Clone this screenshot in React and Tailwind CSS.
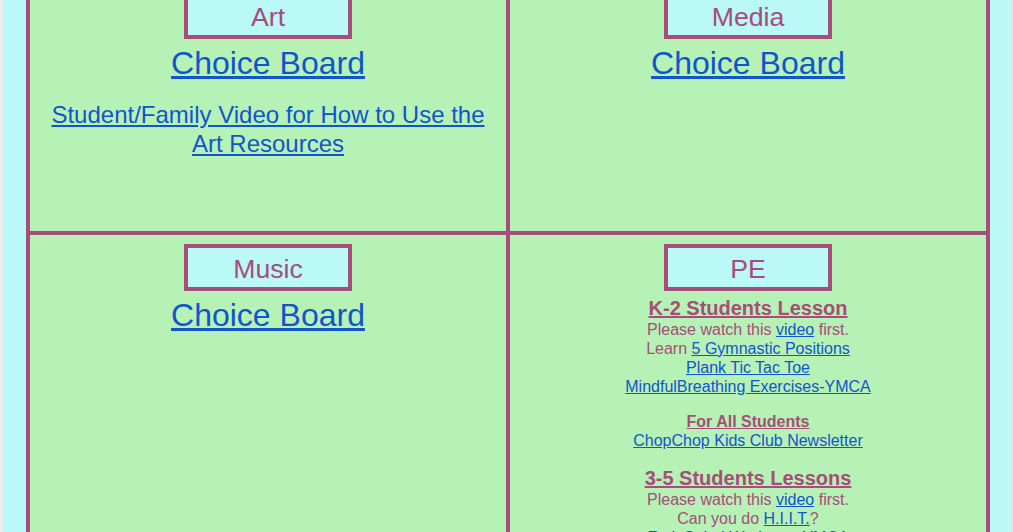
import React from 'react';

const TitleBox = ({ children }) => (
  <div className="w-[168px] h-[47px] border-4 border-[#a64d79] bg-[#bbf8f8] pt-[6px] text-center text-[26.67px] leading-[31px] text-[#a64d79]">
    {children}
  </div>
);

const Link = ({ children, className = '' }) => (
  <a href="#" className={`text-[#1155cc] underline ${className}`}>
    {children}
  </a>
);

const ChoiceBoard = () => (
  <Link className="mt-[6px] block text-[32px] leading-[36px]">Choice Board</Link>
);

export default function App() {
  return (
    <div className="h-[532px] overflow-hidden bg-[#bbf8f8] border-l-[3px] border-l-[#ececec] border-r-2 border-r-[#e4e4e4] font-['Liberation_Sans',Arial,sans-serif]">
      <div className="ml-[23px] mt-[-21px] w-[964px] grid grid-cols-2 grid-rows-[248px_auto] gap-[4px] p-[4px] bg-[#a64d79]">
        {/* Art */}
        <div className="bg-[#b6f2b6] pt-[9px] px-[9px] flex flex-col items-center text-center">
          <TitleBox>Art</TitleBox>
          <ChoiceBoard />
          <Link className="mt-[19px] block text-[24px] leading-[29px]">
            Student/Family Video for How to Use the Art Resources
          </Link>
        </div>

        {/* Media */}
        <div className="bg-[#b6f2b6] pt-[9px] px-[9px] flex flex-col items-center text-center">
          <TitleBox>Media</TitleBox>
          <ChoiceBoard />
        </div>

        {/* Music */}
        <div className="bg-[#b6f2b6] pt-[9px] px-[9px] flex flex-col items-center text-center">
          <TitleBox>Music</TitleBox>
          <ChoiceBoard />
        </div>

        {/* PE */}
        <div className="bg-[#b6f2b6] pt-[9px] px-[9px] pb-8 flex flex-col items-center text-center text-[#a64d79] text-[16px] leading-[19px]">
          <TitleBox>PE</TitleBox>
          <p className="mt-[6px] text-[20px] leading-[23px] font-bold underline">K-2 Students Lesson</p>
          <p>Please watch this <Link>video</Link> first.</p>
          <p>Learn <Link>5 Gymnastic Positions</Link></p>
          <p><Link>Plank Tic Tac Toe</Link></p>
          <p><Link>MindfulBreathing Exercises-YMCA</Link></p>

          <p className="mt-4 font-bold underline">For All Students</p>
          <p><Link>ChopChop Kids Club Newsletter</Link></p>

          <p className="mt-[17px] text-[20px] leading-[23px] font-bold underline">3-5 Students Lessons</p>
          <p>Please watch this <Link>video</Link> first.</p>
          <p>Can you do <Link>H.I.I.T.</Link>?</p>
          <p><Link>Fruit Salad Workout - YMCA</Link></p>
          <p><Link>Yoga for Kids</Link></p>
        </div>
      </div>
    </div>
  );
}
